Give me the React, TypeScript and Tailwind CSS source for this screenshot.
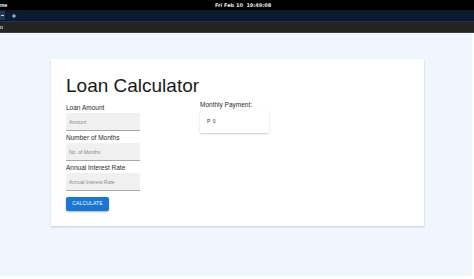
import { Plus } from "lucide-react";

function Field({ label, placeholder }: { label: string; placeholder: string }) {
  return (
    <div className="flex flex-col">
      <label className="text-[6.5px] leading-[8px] h-[8px] text-[#2a2a2a]">{label}</label>
      <div className="mt-[1px] h-[18px] w-[74px] bg-[#f0f0f0] border-b border-[#a8a8a8] rounded-t-[2px] flex items-center pl-[3px] pt-[1px]">
        <span className="text-[5px] leading-[6px] text-[#8a8a8a]">{placeholder}</span>
      </div>
    </div>
  );
}

export default function App() {
  return (
    <div className="w-[474px] h-[279px] overflow-hidden bg-white flex flex-col font-['Liberation_Sans',Arial,sans-serif]">
      {/* system top bar */}
      <div className="h-[10px] bg-black relative flex items-center">
        <span className="text-[5px] font-bold text-white leading-none">me</span>
        <span className="absolute left-[215px] top-[2.5px] text-[5px] font-bold text-[#e8e8e8] leading-none whitespace-pre font-['DejaVu_Sans',sans-serif]">
          Fri Feb 10  19:49:08
        </span>
      </div>

      {/* browser tabs */}
      <div className="h-[12px] bg-[#0b1a31] flex items-center border-b border-[#1d3554]">
        <div className="h-[9px] w-[5px] bg-[#1f3857] flex items-center justify-center rounded-r-[1px]">
          <div className="w-[3px] h-[1px] bg-[#c9d6e6]" />
        </div>
        <Plus className="ml-[6px] w-[6px] h-[6px] text-white" strokeWidth={3} />
      </div>

      {/* toolbar */}
      <div className="h-[11px] bg-[#232323] flex items-center border-b border-[#3b4047]">
        <div className="w-[3px] h-[3px] border border-[#8a8a8a]" />
      </div>

      {/* page */}
      <div className="flex">
        <div className="w-[472px] h-[243px] bg-[#eff6fe] pt-[26px] pl-[51px]">
          <div className="w-[373px] bg-white shadow-[0_1px_2px_rgba(0,0,0,0.18)] pt-[17px] pl-[15px] pb-[15px]">
            <h1 className="text-[19px] leading-[19px] text-[#1a1a1a]">Loan Calculator</h1>
            <div className="flex mt-[8.5px]">
              <div className="w-[134px] flex flex-col gap-[3px]">
                <Field label="Loan Amount" placeholder="Amount" />
                <Field label="Number of Months" placeholder="No. of Months" />
                <Field label="Annual Interest Rate" placeholder="Annual Interest Rate" />
                <button className="mt-[3.5px] h-[14px] w-[43px] bg-[#1976d2] rounded-[2px] shadow-[0_1px_2px_rgba(0,0,0,0.3)] text-white text-[5px] tracking-[0.15px] flex items-center justify-center">
                  CALCULATE
                </button>
              </div>
              <div className="-mt-[2.5px] flex flex-col">
                <span className="text-[6.5px] leading-[8px] h-[8px] text-[#2a2a2a]">Monthly Payment:</span>
                <div className="mt-[2px] w-[69px] h-[22px] bg-white shadow-[0_1px_2px_rgba(0,0,0,0.2),0_0_1px_rgba(0,0,0,0.05)] rounded-[1px] flex items-center pl-[7px]">
                  <span className="text-[5px] text-[#333] tracking-[0.5px]">P 0</span>
                </div>
              </div>
            </div>
          </div>
        </div>
        <div className="flex-1 bg-white" />
      </div>
    </div>
  );
}
